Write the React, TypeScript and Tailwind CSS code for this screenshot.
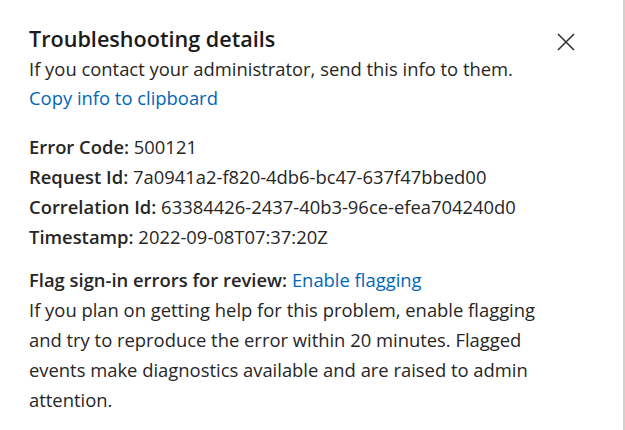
export default function App() {
    return (
        <div className="w-[625px] h-[430px] bg-white overflow-hidden flex font-['Open_Sans',sans-serif]">
            <div className="flex-1 flex">
                {/* content */}
                <div className="flex-1 pl-[29px] pt-[24px] text-[18.4px] text-[#262626]">
                    <h2 className="text-[21.6px] font-semibold leading-[30px] text-[#1b1b1b]">Troubleshooting details</h2>
                    <p className="leading-[29px]">If you contact your administrator, send this info to them.</p>
                    <p className="leading-[29px] text-[#0067b8]">Copy info to clipboard</p>

                    <div className="mt-[20px] leading-[30px]">
                        <p><span className="font-semibold">Error Code:</span> 500121</p>
                        <p><span className="font-semibold">Request Id:</span> 7a0941a2-f820-4db6-bc47-637f47bbed00</p>
                        <p><span className="font-semibold">Correlation Id:</span> 63384426-2437-40b3-96ce-efea704240d0</p>
                        <p><span className="font-semibold">Timestamp:</span> 2022-09-08T07:37:20Z</p>
                    </div>

                    <div className="mt-[13px] leading-[30px]">
                        <p>
                            <span className="font-semibold">Flag sign-in errors for review:</span>{" "}
                            <span className="text-[#0067b8]">Enable flagging</span>
                        </p>
                        <p>
                            If you plan on getting help for this problem, enable flagging<br />
                            and try to reproduce the error within 20 minutes. Flagged<br />
                            events make diagnostics available and are raised to admin<br />
                            attention.
                        </p>
                    </div>
                </div>
                {/* close */}
                <div className="pt-[33px] pr-[48px]">
                    <svg width="18" height="18" viewBox="0 0 18 18" className="text-[#323130]">
                        <path d="M1 1 L17 17 M17 1 L1 17" stroke="currentColor" strokeWidth="1.6" fill="none" />
                    </svg>
                </div>
            </div>
            <div className="w-[2px] bg-[#d2d2ca]" />
        </div>
    )
}
